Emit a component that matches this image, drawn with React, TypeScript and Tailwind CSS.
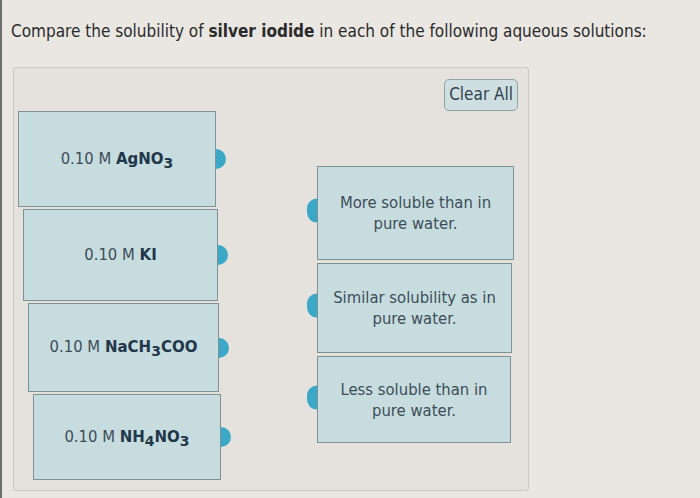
import React from 'react'

// ─── Data ─────────────────────────────────────────────────────────────
type Solution = { plain: string; formula: React.ReactNode; box: string }

const Sub = ({ children }: { children: React.ReactNode }) => (
  <span className="relative top-[4px] text-[14px] align-baseline">{children}</span>
)

const solutions: Solution[] = [
  { plain: '0.10 M', formula: <>AgNO<Sub>3</Sub></>, box: 'ml-[4px] w-[198px] h-[96px]' },
  { plain: '0.10 M', formula: <>KI</>, box: 'ml-[9px] w-[195px] h-[92px]' },
  { plain: '0.10 M', formula: <>NaCH<Sub>3</Sub>COO</>, box: 'ml-[14px] w-[191px] h-[89px]' },
  { plain: '0.10 M', formula: <>NH<Sub>4</Sub>NO<Sub>3</Sub></>, box: 'ml-[19px] w-[188px] h-[86px]' },
]

const answers = [
  { lines: ['More soluble than in', 'pure water.'], box: 'w-[197px] h-[94px]' },
  { lines: ['Similar solubility as in', 'pure water.'], box: 'w-[195px] h-[90px]' },
  { lines: ['Less soluble than in', 'pure water.'], box: 'w-[194px] h-[87px]' },
]

const font = { fontFamily: '"DejaVu Sans Condensed", "DejaVu Sans", Verdana, sans-serif' }
const wide = { fontFamily: '"DejaVu Sans", Verdana, sans-serif' }

// ─── Cards ────────────────────────────────────────────────────────────
function SolutionCard({ s }: { s: Solution }) {
  return (
    <div className={`relative flex items-center justify-center border border-[#7e9195] bg-[#c7dcdf] ${s.box}`}>
      <p className="text-[16.5px] text-[#3d4d58] whitespace-nowrap">
        {s.plain}{' '}
        <span className="font-bold text-[#22374a] text-[15px]" style={wide}>{s.formula}</span>
      </p>
      {/* tab on the right */}
      <span className="absolute right-[-11px] top-1/2 -translate-y-1/2 w-[10px] h-[20px] rounded-r-full bg-[#3aa8c6]" />
    </div>
  )
}

function AnswerCard({ lines, box }: { lines: string[]; box: string }) {
  return (
    <div className={`relative flex flex-col items-center justify-center border border-[#7e9195] bg-[#c7dcdf] ${box}`}>
      {lines.map((l) => (
        <p key={l} className="text-[16.5px] leading-[21px] text-[#3d4d58] whitespace-nowrap">{l}</p>
      ))}
      {/* tab on the left */}
      <span className="absolute left-[-11px] top-1/2 -translate-y-[60%] w-[10px] h-[24px] rounded-l-full bg-[#3aa8c6]" />
    </div>
  )
}

export default function App() {
  return (
    <div className="w-[700px] h-[498px] overflow-hidden bg-[#eae6e2] border-l-[2px] border-[#6c6c6c]" style={font}>
      {/* ─── Question ─────────────────────────────────────────────── */}
      <p className="pl-[9px] pt-[21px] text-[17px] leading-[20px] text-[#2b2b2b] whitespace-nowrap">
        Compare the solubility of <span className="font-bold">silver iodide</span> in each of the following aqueous solutions:
      </p>

      {/* ─── Drag area ────────────────────────────────────────────── */}
      <div className="ml-[11px] mt-[26px] w-[516px] h-[424px] rounded-[3px] border border-[#cbc8c5] bg-[#e5e1dd]">
        <div className="flex justify-end pt-[11px] pr-[10px]">
          <button className="h-[32px] px-[4px] rounded-[5px] border border-[#8fa3a6] bg-[#cfdfe1] text-[17px] text-[#2f4250]">
            Clear All
          </button>
        </div>

        <div className="flex">
          <div className="flex flex-col gap-[2px]">
            {solutions.map((s, i) => (
              <SolutionCard key={i} s={s} />
            ))}
          </div>

          <div className="ml-[96px] mt-[55px] flex flex-col gap-[3px]">
            {answers.map((a) => (
              <AnswerCard key={a.lines[0]} lines={a.lines} box={a.box} />
            ))}
          </div>
        </div>
      </div>
    </div>
  )
}
